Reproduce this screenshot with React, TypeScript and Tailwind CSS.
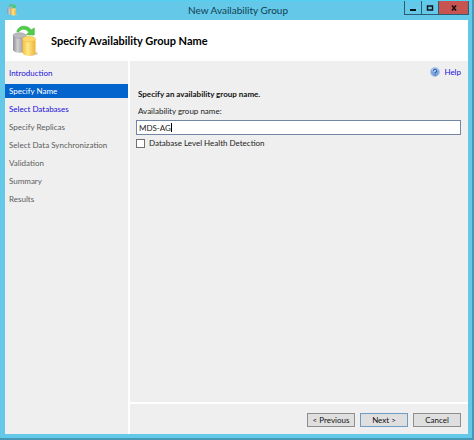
import React from "react";

type Step = { label: string; state: "link" | "current" | "pending" };

const steps: Step[] = [
  { label: "Introduction", state: "link" },
  { label: "Specify Name", state: "current" },
  { label: "Select Databases", state: "link" },
  { label: "Specify Replicas", state: "pending" },
  { label: "Select Data Synchronization", state: "pending" },
  { label: "Validation", state: "pending" },
  { label: "Summary", state: "pending" },
  { label: "Results", state: "pending" },
];

function Databases({ className, id }: { className: string; id: string }) {
  return (
    <svg viewBox="0 0 26 32" className={className} aria-hidden="true">
      <defs>
        <linearGradient id={id + "s"}>
          <stop offset="0" stopColor="#8f8f94" />
          <stop offset="0.35" stopColor="#d0d0d3" />
          <stop offset="1" stopColor="#85858a" />
        </linearGradient>
        <linearGradient id={id + "g"}>
          <stop offset="0" stopColor="#f3bd3a" />
          <stop offset="0.4" stopColor="#ffe88a" />
          <stop offset="1" stopColor="#eeb435" />
        </linearGradient>
      </defs>
      <ellipse cx="19" cy="28.500" rx="7" ry="2.200" fill="#d9cfb4" />
      <path d="M1 10.500v14c0 1.800 2.800 3.200 6.500 3.200s6.500-1.400 6.500-3.200v-14z" fill={"url(#" + id + "s)"} />
      <ellipse cx="7.500" cy="10.500" rx="6.500" ry="2.800" fill="#b9b9be" stroke="#97979b" strokeWidth="0.500" />
      <path d="M10.500 14v13.500c0 1.800 2.800 3.200 6.500 3.200s6.500-1.400 6.500-3.200v-13.500z" fill={"url(#" + id + "g)"} />
      <ellipse cx="17" cy="14" rx="6.500" ry="2.800" fill="#fcd868" stroke="#edba45" strokeWidth="0.500" />
      <path d="M4.800 6.800C5.500 3 9 1 12 1.200c3.200.1 5.500 1.500 7.300 3.600L22.300 3V10L14.200 9.800L16.800 7.200C14.500 4 9.500 2.800 7 6.800z" fill="#4fce49" stroke="#35ac35" strokeWidth="0.500" />
    </svg>
  );
}

function HelpIcon() {
  return (
    <svg viewBox="0 0 10 10" className="size-[10px]" aria-hidden="true">
      <circle cx="5" cy="5" r="4.500" fill="#7fa6dc" stroke="#b5c8e6" strokeWidth="0.800" />
      <ellipse cx="5" cy="3" rx="3" ry="1.800" fill="#b4cff0" />
      <path d="M3.400 4c0-2.200 3.400-2.200 3.400-.2C6.800 5 5.200 5 5.200 6.300" fill="none" stroke="#2f5cb0" strokeWidth="1.100" />
      <circle cx="5.200" cy="7.900" r="0.700" fill="#2f5cb0" />
    </svg>
  );
}

function stepClass(state: Step["state"]) {
  if (state === "current") return "bg-[#0264cc] text-white";
  if (state === "link") return "text-[#1c10dc]";
  return "text-[#5c5c5c]";
}

const buttonBase = "h-[14px] w-12 border bg-[#dfdfdf] text-center leading-[12px] text-[#111]";

export default function App() {
  return (
    <div className="flex h-screen flex-col border-r-2 border-b-2 border-[#4698b4] bg-[#64c8e9] font-[Lato,'Open_Sans',sans-serif] text-[8px] leading-[14px]">
      <header className="flex h-5 shrink-0 items-start border-t border-[#52d0f4] pr-[3px] pl-[7px]">
        <div className="flex h-[18px] flex-1 items-center">
          <Databases id="small" className="h-3 w-[10px]" />
        </div>
        <h1 className="text-[10px] leading-[18px] text-[#12414f]">New Availability Group</h1>
        <div className="flex flex-1 justify-end">
          <div className="flex h-[14px] border border-t-0 border-[#2c5c70]">
            <button aria-label="Minimize" className="flex w-[17px] items-center justify-center border-r border-[#2c5c70]">
              <svg viewBox="0 0 8 8" className="size-2"><path d="M1 5h6v2H1z" fill="#0b1418" /></svg>
            </button>
            <button aria-label="Maximize" className="flex w-[17px] items-center justify-center border-r border-[#2c5c70]">
              <svg viewBox="0 0 8 8" className="size-2"><path d="M1.500 2h5v4h-5z" fill="none" stroke="#0b1418" strokeWidth="1.500" /></svg>
            </button>
            <button aria-label="Close" className="flex w-[29px] items-center justify-center bg-[#c75450]">
              <svg viewBox="0 0 8 8" className="size-2"><path d="M2 1.500l4 5M6 1.500l-4 5" fill="none" stroke="#1a0e0e" strokeWidth="1.600" /></svg>
            </button>
          </div>
        </div>
      </header>

      <div className="mr-1 mb-1 ml-[5px] flex min-h-0 flex-1 flex-col bg-[#efefef]">
        <div className="flex h-[41px] shrink-0 items-center gap-[13px] bg-white pl-[7px]">
          <Databases id="large" className="h-8 w-[26px]" />
          <h2 className="text-[11px] font-bold text-black">Specify Availability Group Name</h2>
        </div>

        <div className="flex min-h-0 flex-1">
          <nav className="w-[125px] shrink-0 border-r-2 border-white pt-[5px]">
            <ul className="flex flex-col gap-1">
              {steps.map((s) => (
                <li key={s.label} className={"pl-1 whitespace-nowrap " + stepClass(s.state)}>
                  {s.state === "pending" ? s.label : <a href="#">{s.label}</a>}
                </li>
              ))}
            </ul>
          </nav>

          <main className="flex min-w-0 flex-1 flex-col">
            <form className="flex flex-1 flex-col pr-[7px] pl-[6px]" onSubmit={(e) => e.preventDefault()}>
              <a href="#" className="mt-1 flex items-center gap-1 self-end text-[#1c10dc]">
                <HelpIcon />
                Help
              </a>
              <h3 className="mt-2 pl-[2px] font-bold text-[#111]">Specify an availability group name.</h3>
              <label htmlFor="ag" className="mt-[3px] pl-[2px] text-[#222]">Availability group name:</label>
              <span className="relative mt-[2px] flex">
                <input id="ag" defaultValue="MDS-AG" className="h-[15px] w-full border border-[#7187a3] bg-white px-[2px] text-[#222] outline-none" />
                <span className="absolute top-[3px] left-[35px] h-[9px] w-px bg-black" />
              </span>
              <label className="mt-[1px] flex items-center gap-1 text-[#222]">
                <input type="checkbox" className="size-[9px] appearance-none border border-[#707070] bg-white" />
                Database Level Health Detection
              </label>
            </form>
            <footer className="flex h-8 shrink-0 items-start justify-end gap-[5px] border-t-2 border-white pt-[9px] pr-[7px]">
              <button className={buttonBase + " border-[#8e8e8e]"}>&lt; Previous</button>
              <button className={buttonBase + " border-[#6d9cc4]"}>Next &gt;</button>
              <button className={buttonBase + " border-[#8e8e8e]"}>Cancel</button>
            </footer>
          </main>
        </div>
      </div>
    </div>
  );
}
